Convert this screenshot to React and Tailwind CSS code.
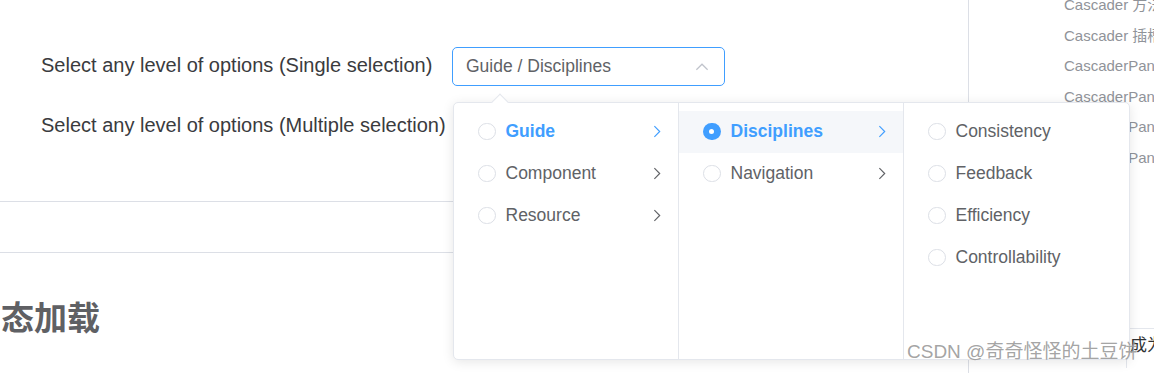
const level1 = [
  { label: "Guide", active: true },
  { label: "Component" },
  { label: "Resource" },
];
const level2 = [
  { label: "Disciplines", active: true, checked: true },
  { label: "Navigation" },
];
const level3 = [
  { label: "Consistency" },
  { label: "Feedback" },
  { label: "Efficiency" },
  { label: "Controllability" },
];

const sideLinks = [
  "Cascader 方法",
  "Cascader 插槽",
  "CascaderPanel 属性",
  "CascaderPanel 事件",
  "CascaderPanel 插槽",
  "CascaderPanel 方法",
];

function Chevron({ className, up }) {
  return (
    <svg viewBox="0 0 16 16" className={className} fill="none" stroke="currentColor" strokeWidth="1.1">
      {up ? <path d="M3 10.5 8 5.5l5 5" /> : <path d="M6 3l5 5-5 5" />}
    </svg>
  );
}

function Radio({ checked }) {
  if (checked) {
    return (
      <span className="flex h-[17.5px] w-[17.5px] shrink-0 items-center justify-center rounded-full bg-[#409eff]">
        <span className="h-[5px] w-[5px] rounded-full bg-white" />
      </span>
    );
  }
  return <span className="h-[17.5px] w-[17.5px] shrink-0 rounded-full border border-[#dcdfe6] bg-white" />;
}

function Column({ items, last, arrows }) {
  return (
    <ul className={`w-[225px] py-[7.5px] ${last ? "" : "border-r border-[#e4e7ed]"}`}>
      {items.map((it) => (
        <li
          key={it.label}
          className={`flex h-[42px] items-center pl-[24px] pr-[13px] ${it.checked ? "bg-[#f5f7fa]" : ""}`}
        >
          <Radio checked={it.checked} />
          <span
            className={`ml-[10px] flex-1 ${it.active ? "font-bold text-[#409eff]" : "text-[#606266]"}`}
          >
            {it.label}
          </span>
          {arrows && (
            <Chevron className={`h-[17px] w-[17px] ${it.active ? "text-[#409eff]" : "text-[#606266]"}`} />
          )}
        </li>
      ))}
    </ul>
  );
}

export default function App() {
  return (
    <div
      className="relative flex h-[373px] w-[1154px] overflow-hidden bg-white text-[17.5px] text-[#606266]"
      style={{ fontFamily: '"Liberation Sans", Arial, "Noto Sans CJK SC", sans-serif' }}
    >
      <main className="w-[969px] shrink-0 border-r border-[#dcdfe6]">
        <div className="pt-[47px]">
          <div className="flex items-center pl-[41px]">
            <span className="-mt-[3px] w-[411px] text-[20px] text-[#3a3b3e]">Select any level of options (Single selection)</span>
            <div className="flex h-[39px] w-[273px] items-center justify-between rounded-[5px] border border-[#409eff] pl-[13px] pr-[13px]">
              <span>Guide / Disciplines</span>
              <Chevron up className="h-[18px] w-[18px] text-[#c0c4cc]" />
            </div>
          </div>
          <div className="mt-[21px] flex h-[39px] items-center pl-[41px]">
            <span className="-mt-[3px] text-[20px] text-[#3a3b3e]">Select any level of options (Multiple selection)</span>
          </div>
        </div>
        <div className="mt-[55px] h-[52px] border-y border-[#dcdfe6]" />
        <h3
          className="mt-[43px] ml-[1px] text-[33px] font-bold leading-[40px] text-[#5f6064]"
          style={{ fontFamily: '"Noto Sans CJK SC", sans-serif' }}
        >
          态加载
        </h3>
      </main>

      <aside className="flex-1 -mt-[10px] pl-[95px] text-[15px] text-[#909399]">
        {sideLinks.map((s) => (
          <div key={s} className="h-[30.5px] whitespace-nowrap leading-[30.5px]">
            {s}
          </div>
        ))}
      </aside>

      <div className="absolute left-[1126px] top-[328px] h-[40px] w-[40px] border-t border-l border-[#e4e7ed] pl-[3px] pt-[4px] text-[17px] text-[#303133]">
        成为
      </div>

      {/* cascader dropdown */}
      <div className="absolute left-[453px] top-[102px] rounded-[5px] border border-[#e4e7ed] bg-white shadow-[0_2px_12px_rgba(0,0,0,0.1)]">
        <span className="absolute -top-[7px] left-[40px] h-[12px] w-[12px] rotate-45 border-l border-t border-[#e4e7ed] bg-white" />
        <div className="relative flex h-[256px]">
          <Column items={level1} arrows />
          <Column items={level2} arrows />
          <Column items={level3} last />
        </div>
      </div>

      <div
        className="pointer-events-none absolute left-[907px] top-[339px] whitespace-nowrap text-[19px] leading-[26px] text-[#999999]/90"
        style={{ fontFamily: '"Liberation Sans", "Noto Sans CJK SC", sans-serif' }}
      >
        CSDN @奇奇怪怪的土豆饼
      </div>
    </div>
  );
}
